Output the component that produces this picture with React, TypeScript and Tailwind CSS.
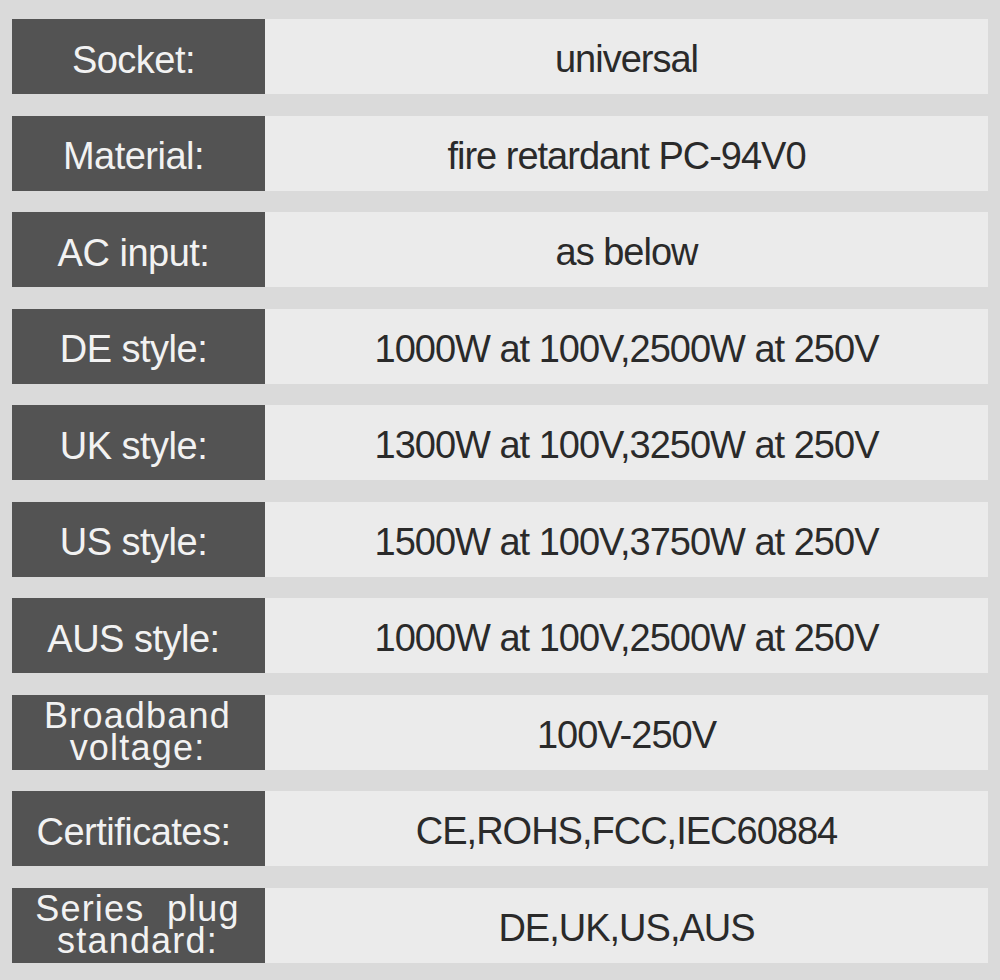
import React from "react";

const rows: { label: React.ReactNode; value: string; two?: boolean }[] = [
  { label: "Socket:", value: "universal" },
  { label: "Material:", value: "fire retardant PC-94V0" },
  { label: "AC input:", value: "as below" },
  { label: "DE style:", value: "1000W at 100V,2500W at 250V" },
  { label: "UK style:", value: "1300W at 100V,3250W at 250V" },
  { label: "US style:", value: "1500W at 100V,3750W at 250V" },
  { label: "AUS style:", value: "1000W at 100V,2500W at 250V" },
  { label: "Broadband\nvoltage:", value: "100V-250V", two: true },
  { label: "Certificates:", value: "CE,ROHS,FCC,IEC60884" },
  { label: "Series\u00a0\u00a0plug\nstandard:", value: "DE,UK,US,AUS", two: true },
];

export default function App() {
  return (
    <div
      className="w-[1000px] h-[980px] bg-[#dadada] pt-[19px] px-[12px] flex flex-col gap-[21.5px]"
      style={{ fontFamily: '"Liberation Sans", Arial, sans-serif' }}
    >
      {rows.map((r, i) => (
        <div key={i} className="flex h-[75px]">
          <div
            className={`w-[253px] bg-[#535353] text-[#f2f2f2] flex items-center justify-center text-center whitespace-pre-line ${
              r.two
                ? "text-[36px] leading-[32px] tracking-[1.2px] pb-[1px] pr-[2px]"
                : "text-[38px] leading-none tracking-[-0.5px] pt-[6px] pr-[10px]"
            }`}
          >
            {r.label}
          </div>
          <div className="flex-1 bg-[#ebebeb] text-[#2a2a2a] flex items-center justify-center text-[38px] leading-none tracking-[-1px] pt-[5px]">
            {r.value}
          </div>
        </div>
      ))}
    </div>
  );
}
